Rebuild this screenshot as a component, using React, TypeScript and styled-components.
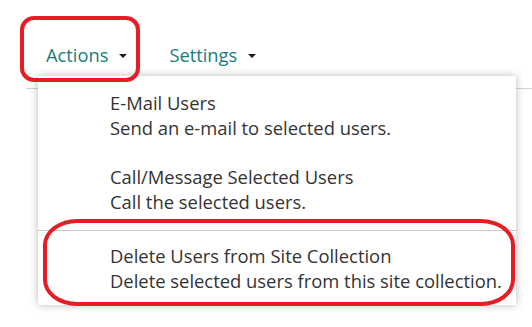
import React from "react";
import styled, { createGlobalStyle } from "styled-components";

const GlobalStyle = createGlobalStyle`
  html, body {
    margin: 0;
    padding: 0;
    background: #ffffff;
  }
  body {
    font-family: "Open Sans", "Liberation Sans", sans-serif;
    width: 532px;
    height: 327px;
    overflow: hidden;
  }
`;

const Page = styled.div`
  position: relative;
  width: 532px;
  height: 327px;
  padding-top: 43px;
  box-sizing: border-box;
`;

const Toolbar = styled.div`
  display: flex;
  align-items: flex-start;
  gap: 42px;
  height: 45px;
  margin-left: 26px;
  padding-left: 20px;
  border-bottom: 1px solid #d4d4d4;
`;

const TabWrap = styled.div`
  position: relative;
`;

const Tab = styled.div`
  display: flex;
  align-items: center;
  gap: 11px;
  font-size: 18.3px;
  line-height: 24px;
  color: #217b7b;
  cursor: pointer;
`;

const Caret = styled.span`
  width: 0;
  height: 0;
  border-left: 4px solid transparent;
  border-right: 4px solid transparent;
  border-top: 4px solid #1e1e1e;
  margin-top: 2px;
`;

const Menu = styled.div`
  position: absolute;
  top: 33px;
  left: -8px;
  width: 478px;
  padding: 2px 0 0;
  background: #ffffff;
  box-shadow: 0 0 8px rgba(0, 0, 0, 0.28);
  z-index: 2;
`;

const Item = styled.div`
  padding: 12px 0 12px 72px;
  font-size: 18.4px;
  line-height: 25px;
  color: #333333;
`;

const Line = styled.div`
  white-space: nowrap;
`;

const Divider = styled.div`
  height: 1px;
  margin: 4px 0 0;
  background: #c8c8c8;
`;

const Mark = styled.div<{ $x: number; $y: number; $w: number; $h: number; $r: string }>`
  position: absolute;
  left: ${({ $x }) => $x}px;
  top: ${({ $y }) => $y}px;
  width: ${({ $w }) => $w}px;
  height: ${({ $h }) => $h}px;
  box-sizing: border-box;
  border: 4px solid #e81c24;
  border-radius: ${({ $r }) => $r};
  pointer-events: none;
  z-index: 3;
`;

const items = [
  { title: "E-Mail Users", desc: "Send an e-mail to selected users." },
  { title: "Call/Message Selected Users", desc: "Call the selected users." },
];

export default function App() {
  return (
    <Page>
      <GlobalStyle />
      <Toolbar>
        <TabWrap>
          <Tab>
            Actions
            <Caret />
          </Tab>
          <Menu>
            {items.map((it) => (
              <Item key={it.title}>
                <Line>{it.title}</Line>
                <Line>{it.desc}</Line>
              </Item>
            ))}
            <Divider />
            <Item>
              <Line>Delete Users from Site Collection</Line>
              <Line>Delete selected users from this site collection.</Line>
            </Item>
          </Menu>
        </TabWrap>
        <Tab>
          Settings
          <Caret />
        </Tab>
      </Toolbar>
      <Mark $x={20} $y={16} $w={120} $h={66} $r="14px" />
      <Mark $x={43} $y={219} $w={472} $h={87} $r="34px / 26px" />
    </Page>
  );
}
